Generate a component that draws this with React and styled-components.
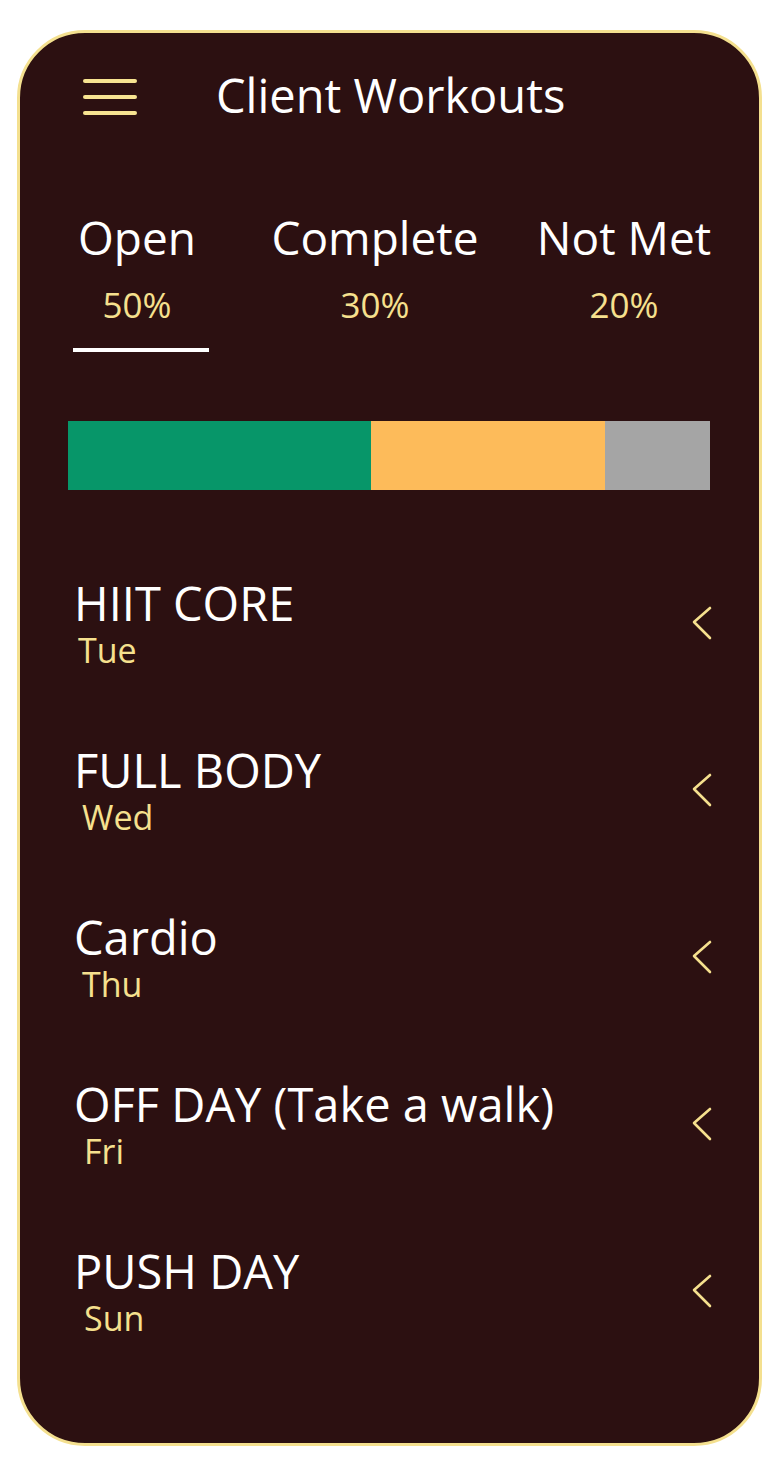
import styled, { createGlobalStyle } from 'styled-components';

const GlobalStyle = createGlobalStyle`
  body {
    margin: 0;
    background: #ffffff;
    font-family: 'Open Sans', 'Noto Sans', sans-serif;
  }
`;

const Page = styled.div`
  padding: 30px 0 0 17px;
`;

const Phone = styled.div`
  box-sizing: border-box;
  width: 745px;
  height: 1416px;
  background: #2c1011;
  border: 3px solid #f4e08f;
  border-radius: 68px;
  padding: 34px 0 0 0;
  display: flex;
  flex-direction: column;
`;

const TopBar = styled.div`
  display: flex;
  align-items: center;
  height: 60px;
  padding-left: 63px;
`;

const MenuButton = styled.button`
  display: flex;
  flex-direction: column;
  gap: 11.5px;
  width: 54px;
  padding: 0;
  background: none;
  border: none;
  cursor: pointer;
`;

const MenuLine = styled.span`
  display: block;
  height: 4.5px;
  border-radius: 3px;
  background: #f7e391;
`;

const Title = styled.h1`
  margin: 0 0 4px 79px;
  font-size: 47px;
  font-weight: 400;
  line-height: 56px;
  color: #ffffff;
`;

const Tabs = styled.div`
  display: grid;
  grid-template-columns: 160px 316px 182px;
  margin: 80px 0 0 37px;
`;

const Tab = styled.div`
  display: flex;
  flex-direction: column;
  align-items: center;
`;

const TabLabel = styled.span`
  font-size: 46px;
  line-height: 60px;
  color: #ffffff;
`;

const TabValue = styled.span`
  margin-top: 18px;
  font-size: 35px;
  line-height: 40px;
  color: #f6e08e;
`;

const Underline = styled.div`
  width: 136px;
  height: 4px;
  margin: 23px 0 0 53px;
  background: ${({ $active }) => ($active ? '#ffffff' : 'transparent')};
`;

const Bar = styled.div`
  display: flex;
  width: 642px;
  height: 69px;
  margin: 69px 0 0 48px;
`;

const Segment = styled.div`
  flex: 0 0 ${({ $w }) => $w}px;
  background: ${({ $color }) => $color};
`;

const List = styled.ul`
  list-style: none;
  margin: 78px 0 0 0;
  padding: 0 47px 0 54px;
  display: flex;
  flex-direction: column;
  gap: 57px;
`;

const Item = styled.li`
  display: flex;
  align-items: center;
  justify-content: space-between;
  height: 110px;
  cursor: pointer;
`;

const ItemText = styled.div`
  display: flex;
  flex-direction: column;
`;

const ItemName = styled.span`
  font-size: 47px;
  line-height: 54px;
  color: #ffffff;
`;

const ItemDay = styled.span`
  padding-left: ${({ $indent }) => $indent}px;
  font-size: 34px;
  line-height: 40px;
  color: #f6e08e;
`;

const Chevron = () => (
  <svg width="20" height="34" viewBox="0 0 20 34" fill="none">
    <polyline
      points="18,2 2,16 18,32"
      stroke="#f6e08e"
      strokeWidth="2.6"
      strokeLinecap="round"
      strokeLinejoin="round"
    />
  </svg>
);

const tabs = [
  { label: 'Open', value: '50%' },
  { label: 'Complete', value: '30%' },
  { label: 'Not Met', value: '20%' },
];

const workouts = [
  { name: 'HIIT CORE', day: 'Tue', indent: 4 },
  { name: 'FULL BODY', day: 'Wed', indent: 8 },
  { name: 'Cardio', day: 'Thu', indent: 8 },
  { name: 'OFF DAY (Take a walk)', day: 'Fri', indent: 10 },
  { name: 'PUSH DAY', day: 'Sun', indent: 10 },
];

export default function App() {
  return (
    <Page>
      <GlobalStyle />
      <Phone>
        <TopBar>
          <MenuButton aria-label="menu">
            <MenuLine />
            <MenuLine />
            <MenuLine />
          </MenuButton>
          <Title>Client Workouts</Title>
        </TopBar>

        <Tabs>
          {tabs.map((t) => (
            <Tab key={t.label}>
              <TabLabel>{t.label}</TabLabel>
              <TabValue>{t.value}</TabValue>
            </Tab>
          ))}
        </Tabs>
        <Underline $active />

        <Bar>
          <Segment $w={303} $color="#079669" />
          <Segment $w={234} $color="#fdbb5a" />
          <Segment $w={105} $color="#a5a5a5" />
        </Bar>

        <List>
          {workouts.map((w) => (
            <Item key={w.name}>
              <ItemText>
                <ItemName>{w.name}</ItemName>
                <ItemDay $indent={w.indent}>{w.day}</ItemDay>
              </ItemText>
              <Chevron />
            </Item>
          ))}
        </List>
      </Phone>
    </Page>
  );
}
